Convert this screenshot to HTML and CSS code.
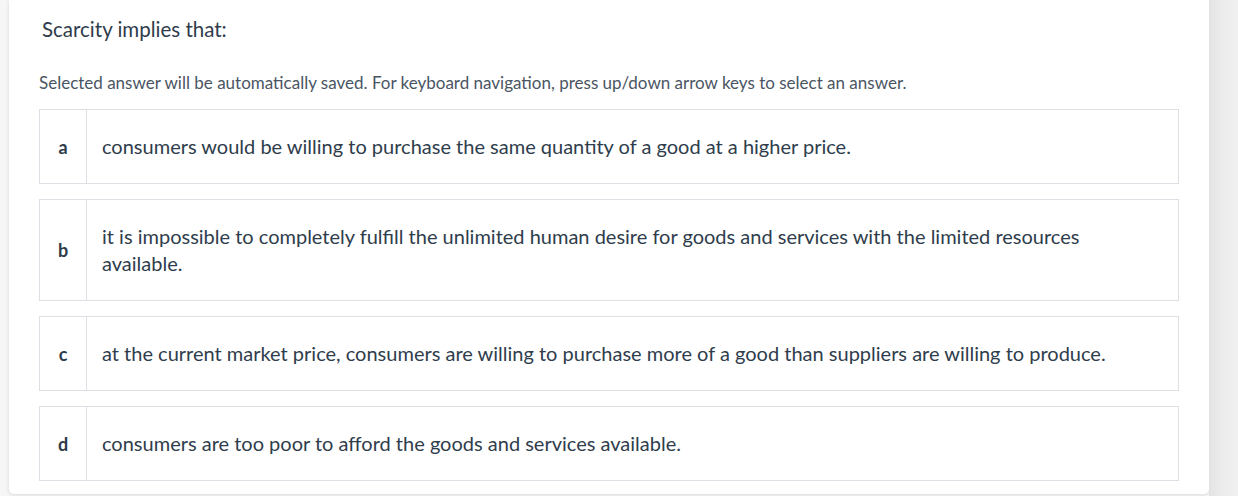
FILE: index.html
```html
<!DOCTYPE html>
<html lang="en">
<head>
<meta charset="utf-8">
<title>Scarcity question</title>
<link rel="stylesheet" href="styles.css">
</head>
<body>
<div class="page">
  <main class="card">
    <h1 class="question">Scarcity implies that:</h1>
    <p class="hint">Selected answer will be automatically saved. For keyboard navigation, press up/down arrow keys to select an answer.</p>
    <ul class="answers">
      <li class="answer"><span class="label">a</span><span class="text">consumers would be willing to purchase the same quantity of a good at a higher price.</span></li>
      <li class="answer"><span class="label">b</span><span class="text">it is impossible to completely fulfill the unlimited human desire for goods and services with the limited resources available.</span></li>
      <li class="answer"><span class="label">c</span><span class="text">at the current market price, consumers are willing to purchase more of a good than suppliers are willing to produce.</span></li>
      <li class="answer"><span class="label">d</span><span class="text">consumers are too poor to afford the goods and services available.</span></li>
    </ul>
  </main>
  <div class="gutter"></div>
</div>
</body>
</html>
```

FILE: styles.css
```css
html, body {
  margin: 0;
  padding: 0;
  height: 100%;
}
body {
  background: #f6f6f6;
  font-family: "Lato", "Source Sans Pro", "Noto Sans", sans-serif;
  color: #2e3b4a;
  overflow: hidden;
}
.page {
  display: flex;
  align-items: flex-start;
  height: 496px;
}
.card {
  margin-left: 9px;
  width: 1200px;
  box-sizing: border-box;
  background: #ffffff;
  border-radius: 0 0 5px 5px;
  box-shadow: 0 1px 4px rgba(0, 0, 0, 0.12);
  padding: 16px 30px 13px 30px;
}
.gutter {
  flex: 1;
  align-self: stretch;
  background: linear-gradient(to right, #e3e3e3 0%, #ebebeb 40%, #f1f1f1 100%);
}
.question {
  margin: 0 0 0 3px;
  font-size: 20.5px;
  line-height: 26px;
  font-weight: 400;
  color: #2f3c4b;
}
.hint {
  margin: 30px 0 15px 0;
  font-size: 17px;
  line-height: 22px;
  color: #4a5563;
}
.answers {
  list-style: none;
  margin: 0;
  padding: 0;
  display: flex;
  flex-direction: column;
  gap: 15px;
}
.answer {
  display: flex;
  border: 1px solid #dcdfe3;
}
.label {
  flex: 0 0 46px;
  display: flex;
  align-items: center;
  justify-content: center;
  border-right: 1px solid #dcdfe3;
  font-size: 18px;
  font-weight: 700;
  color: #2e3b4a;
}
.text {
  flex: 1;
  padding: 23px 50px 23px 15px;
  font-size: 20px;
  line-height: 27px;
  color: #2f3d4c;
}
```
